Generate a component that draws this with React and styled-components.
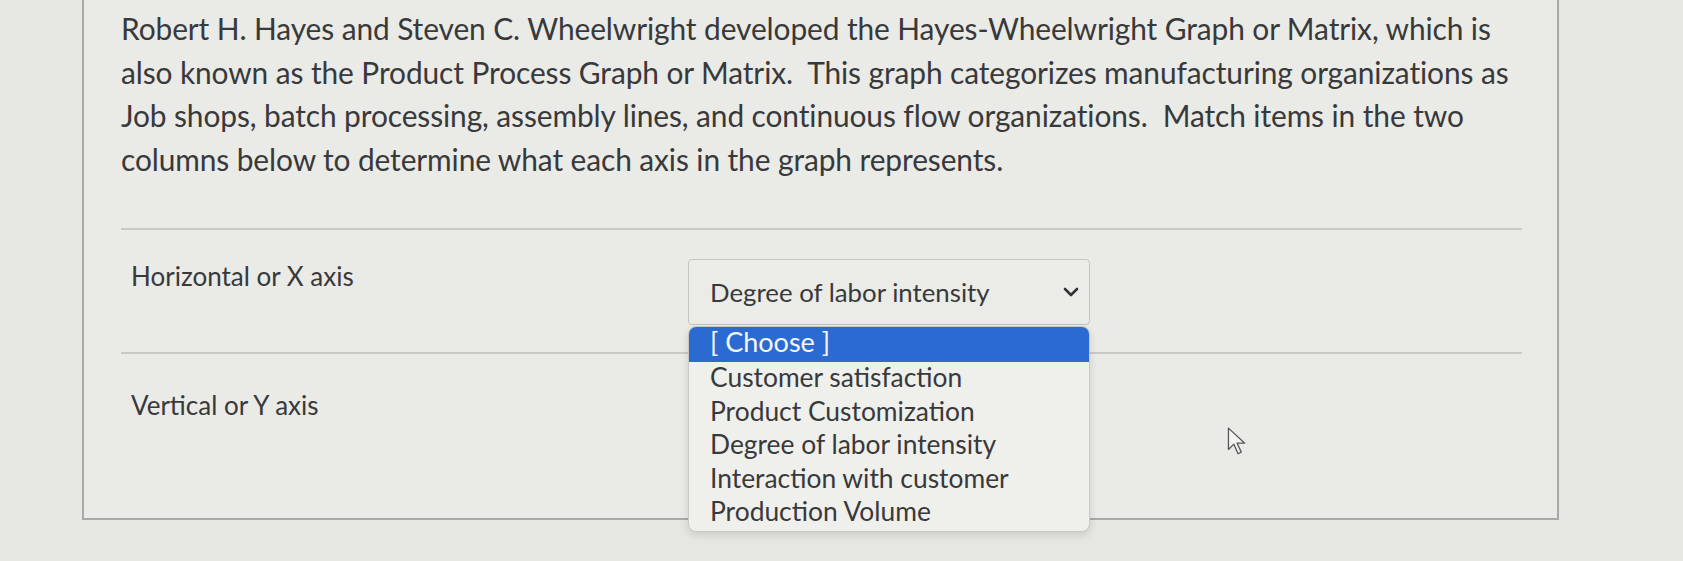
import styled, { createGlobalStyle } from "styled-components";

const Global = createGlobalStyle`
  html, body {
    margin: 0;
    padding: 0;
    background: #e6e6e2;
    font-family: Lato, "Open Sans", sans-serif;
    color: #38393b;
  }
`;

const Page = styled.div`
  width: 1683px;
  height: 561px;
  overflow: hidden;
  position: relative;
`;

const Card = styled.div`
  margin-left: 82px;
  width: 1477px;
  height: 520px;
  border: 2px solid #a9a9a7;
  border-top: none;
  background: #eaeae6;
  padding: 7px 0 0 37px;
  box-sizing: border-box;
  position: relative;
`;

const Question = styled.p`
  margin: 0;
  font-size: 29.9px;
  line-height: 43.5px;
  letter-spacing: -0.1px;
  width: 1401px;
  white-space: nowrap;
`;

const Divider = styled.div`
  width: 1401px;
  height: 2px;
  background: #c9c9c6;
  margin-top: ${(p) => p.top || 0}px;
`;

const Row = styled.div`
  display: grid;
  grid-template-columns: 567px 402px;
  height: ${(p) => p.h}px;
  padding-top: ${(p) => p.pad}px;
  box-sizing: border-box;
`;

const Label = styled.div`
  padding-left: 10px;
  font-size: 26px;
  line-height: 30px;
  padding-top: ${(p) => p.off}px;
`;

const SelectBox = styled.div`
  position: relative;
  height: 66px;
  border: 1px solid #c5c5c2;
  border-radius: 4px;
  background: #ebebe7;
  box-sizing: border-box;
  display: flex;
  align-items: center;
  justify-content: space-between;
  padding: 0 10px 0 21px;
  font-size: 25.8px;
`;

const Menu = styled.ul`
  position: absolute;
  left: -1px;
  top: 66px;
  width: 400px;
  margin: 0;
  padding: 0 0 1px;
  list-style: none;
  background: #efefec;
  border: 1px solid #c9c9c6;
  border-radius: 8px;
  box-shadow: 0 3px 8px rgba(0, 0, 0, 0.12);
  overflow: hidden;
  z-index: 2;
`;

const Option = styled.li`
  height: ${(p) => (p.active ? 35 : 33.5)}px;
  line-height: 30px;
  padding-left: 21px;
  font-size: ${(p) => (p.active ? 27 : 26.4)}px;
  white-space: nowrap;
  background: ${(p) => (p.active ? "#2b6bd1" : "transparent")};
  color: ${(p) => (p.active ? "#f4f7fc" : "#38393b")};
`;

const Cursor = styled.svg`
  position: absolute;
  left: 1226px;
  top: 426px;
`;

const options = [
  "[ Choose ]",
  "Customer satisfaction",
  "Product Customization",
  "Degree of labor intensity",
  "Interaction with customer",
  "Production Volume",
];

export default function App() {
  return (
    <Page>
      <Global />
      <Card>
        <Question>
          Robert H. Hayes and Steven C. Wheelwright developed the Hayes-Wheelwright Graph or Matrix, which is
          <br />
          also known as the Product Process Graph or Matrix.&nbsp; This graph categorizes manufacturing organizations as
          <br />
          Job shops, batch processing, assembly lines, and continuous flow organizations.&nbsp; Match items in the two
          <br />
          columns below to determine what each axis in the graph represents.
        </Question>
        <Divider top={47} />
        <Row h={122} pad={29}>
          <Label off={2}>Horizontal or X axis</Label>
          <SelectBox>
            <span>Degree of labor intensity</span>
            <svg width="16" height="10" viewBox="0 0 16 10">
              <polyline points="2,2 8,8 14,2" fill="none" stroke="#333" strokeWidth="2.6" strokeLinecap="round" strokeLinejoin="round" />
            </svg>
            <Menu>
              {options.map((o, i) => (
                <Option key={o} active={i === 0}>
                  {o}
                </Option>
              ))}
            </Menu>
          </SelectBox>
        </Row>
        <Divider />
        <Row h={150} pad={36}>
          <Label off={0}>Vertical or Y axis</Label>
        </Row>
      </Card>
      <Cursor width="22" height="32" viewBox="0 0 20 30">
        <path d="M2 2 L2 22 L7 17 L11 26 L14 24.5 L10 16 L17 16 Z" fill="#f4f4f2" stroke="#555" strokeWidth="1.2" strokeLinejoin="round" />
      </Cursor>
    </Page>
  );
}
